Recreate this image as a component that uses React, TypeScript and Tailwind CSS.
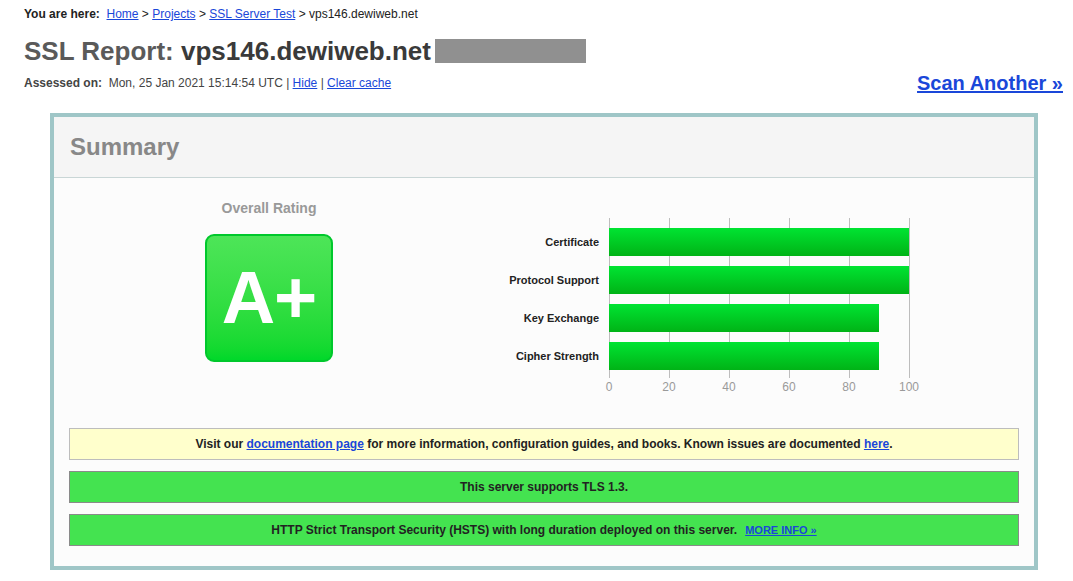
import React from "react";

type Bar = { label: string; value: number };

const bars: Bar[] = [
  { label: "Certificate", value: 100 },
  { label: "Protocol Support", value: 100 },
  { label: "Key Exchange", value: 90 },
  { label: "Cipher Strength", value: 90 },
];

const font = { fontFamily: '"Liberation Sans", Arial, sans-serif' };

function RatingChart() {
  const left = 119;
  const scale = 3; // px per point
  const ticks = [0, 20, 40, 60, 80, 100];
  return (
    <svg width={440} height={190} className="mt-[10px] ml-[6px] shrink-0" style={font}>
      <defs>
        <linearGradient id="barGrad" x1="0" y1="0" x2="0" y2="1">
          <stop offset="0" stopColor="#00e432" />
          <stop offset="1" stopColor="#00b316" />
        </linearGradient>
      </defs>
      {ticks.map((t) => (
        <line key={t} x1={left + t * scale + 0.5} x2={left + t * scale + 0.5} y1={8} y2={168} stroke="#bdbdbd" strokeWidth={1} />
      ))}
      {bars.map((b, i) => {
        const y = 18 + i * 38;
        return (
          <g key={b.label}>
            <rect x={left} y={y} width={b.value * scale} height={28} fill="url(#barGrad)" />
            <text x={109} y={y + 18} textAnchor="end" fontSize={11} fontWeight={700} fill="#222">
              {b.label}
            </text>
          </g>
        );
      })}
      {ticks.map((t) => (
        <text key={t} x={left + t * scale} y={181} textAnchor="middle" fontSize={12} fill="#9a9a9a">
          {t}
        </text>
      ))}
    </svg>
  );
}

export default function App() {
  return (
    <div className="min-h-screen bg-white text-[#222]" style={font}>
      <div className="pt-[7px] pl-[24px] pr-[10px]">
        <div className="text-[12px] leading-[14px] text-[#222]">
          <span className="font-bold">You are here:</span>&nbsp;{" "}
          <a href="#" className="text-[#1a47d9] underline">Home</a> &gt;{" "}
          <a href="#" className="text-[#1a47d9] underline">Projects</a> &gt;{" "}
          <a href="#" className="text-[#1a47d9] underline">SSL Server Test</a> &gt; vps146.dewiweb.net
        </div>
        <div className="mt-[13px] flex items-center h-[34px]">
          <h1 className="text-[26px] leading-[34px] font-bold text-[#5a5a5a]">
            SSL Report: <span className="text-[#3a3a3a]">vps146.dewiweb.net</span>
          </h1>
          <span className="ml-[4px] inline-block w-[151px] h-[24px] bg-[#909090]" />
        </div>
        <div className="mt-[3px] flex items-center justify-between">
          <div className="text-[12px] leading-[14px] text-[#444]">
            <span className="font-bold">Assessed on:</span>&nbsp; Mon, 25 Jan 2021 15:14:54 UTC |{" "}
            <a href="#" className="text-[#1a47d9] underline">Hide</a> |{" "}
            <a href="#" className="text-[#1a47d9] underline">Clear cache</a>
          </div>
          <a href="#" className="text-[20px] leading-[24px] font-bold text-[#1a47d9] underline">
            Scan Another »
          </a>
        </div>
      </div>

      <div className="mt-[18px] ml-[50px] w-[988px] border-[4px] border-[#9fc6c7] bg-[#fcfcfc]">
        <div className="h-[61px] flex items-center pl-[16px] bg-[#f5f5f5] border-b border-[#c9d6d6]">
          <h2 className="text-[24px] font-bold text-[#888]">Summary</h2>
        </div>
        <div className="flex pt-[22px]">
          <div className="w-[430px] flex flex-col items-center">
            <div className="text-[14px] leading-[16px] font-bold text-[#999]">Overall Rating</div>
            <div className="mt-[18px] w-[128px] h-[128px] rounded-[9px] border-[2px] border-[#00c82c] bg-gradient-to-b from-[#4de558] to-[#00d82a] flex items-center justify-center">
              <span className="text-white font-bold text-[74px] leading-none tracking-[-1px]">A+</span>
            </div>
          </div>
          <RatingChart />
        </div>

        <div className="mt-[28px] mx-[15px] flex flex-col gap-[11px] pb-[20px]">
          <div className="h-[32px] flex items-center justify-center bg-[#ffffcc] border border-[#bdbdbd] text-[12px] font-bold text-[#222]">
            <span>
              Visit our <a href="#" className="text-[#1a47d9] underline">documentation page</a> for more information,
              configuration guides, and books. Known issues are documented{" "}
              <a href="#" className="text-[#1a47d9] underline">here</a>.
            </span>
          </div>
          <div className="h-[32px] flex items-center justify-center bg-[#44e350] border border-[#8a8a8a] text-[12px] font-bold text-[#222]">
            This server supports TLS 1.3.
          </div>
          <div className="h-[32px] flex items-center justify-center bg-[#44e350] border border-[#8a8a8a] text-[12px] font-bold text-[#222]">
            HTTP Strict Transport Security (HSTS) with long duration deployed on this server.
            <a href="#" className="ml-[8px] text-[11px] text-[#1a47d9] underline">MORE INFO »</a>
          </div>
        </div>
      </div>
    </div>
  );
}
